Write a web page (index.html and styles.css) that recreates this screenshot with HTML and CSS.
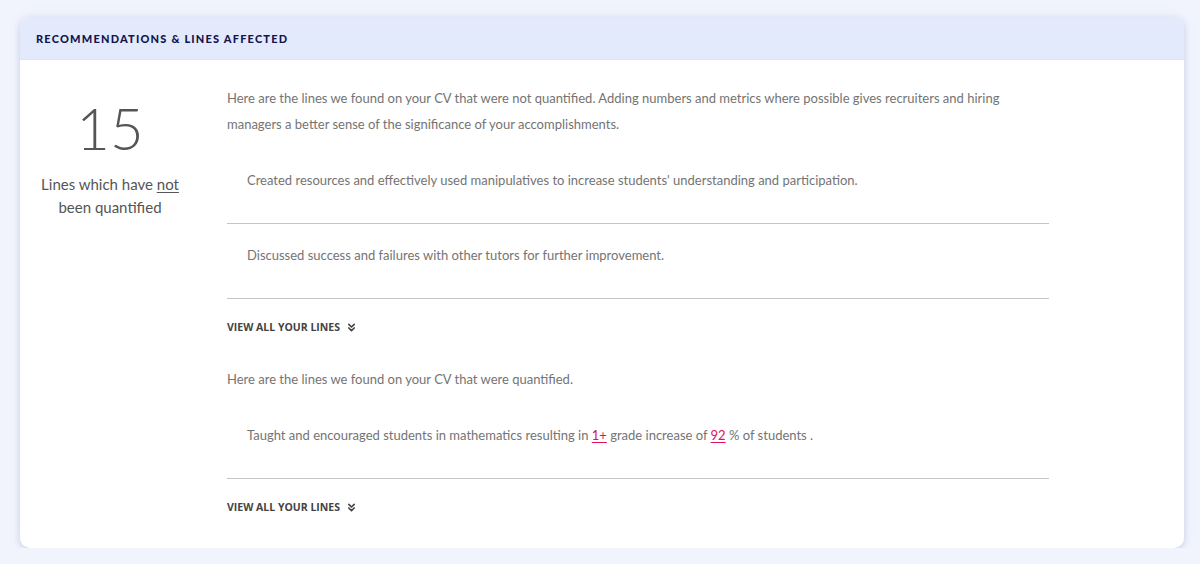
FILE: index.html
```html
<!DOCTYPE html>
<html lang="en">

<head>
    <meta charset="UTF-8">
    <meta name="viewport" content="width=device-width, initial-scale=1.0">
    <title>Recommendations</title>
    <link rel="stylesheet" href="styles.css">
</head>

<body>

    <div class="card">
        <!-- Card header -->
        <div class="card-header">
            <h2>Recommendations &amp; Lines Affected</h2>
        </div>

        <div class="card-body">
            <!-- Count on the left -->
            <div class="count-col">
                <div class="count">15</div>
                <p class="count-label">Lines which have <u>not</u><br>been quantified</p>
            </div>

            <!-- Lines on the right -->
            <div class="lines-col">
                <p class="intro">Here are the lines we found on your CV that were not quantified. Adding numbers and metrics where possible gives recruiters and hiring managers a better sense of the significance of your accomplishments.</p>

                <div class="line-item">Created resources and effectively used manipulatives to increase students' understanding and participation.</div>
                <div class="line-item">Discussed success and failures with other tutors for further improvement.</div>

                <a href="#" class="view-all">View all your lines
                    <svg width="9" height="9" viewBox="0 0 10 10" fill="none" stroke="currentColor" stroke-width="1.8" stroke-linecap="round" stroke-linejoin="round"><path d="M2 1.5 5 4.5 8 1.5"/><path d="M2 5.5 5 8.5 8 5.5"/></svg>
                </a>

                <p class="intro intro-second">Here are the lines we found on your CV that were quantified.</p>

                <div class="line-item">Taught and encouraged students in mathematics resulting in <span class="metric">1+</span> grade increase of <span class="metric">92</span> % of students .</div>

                <a href="#" class="view-all">View all your lines
                    <svg width="9" height="9" viewBox="0 0 10 10" fill="none" stroke="currentColor" stroke-width="1.8" stroke-linecap="round" stroke-linejoin="round"><path d="M2 1.5 5 4.5 8 1.5"/><path d="M2 5.5 5 8.5 8 5.5"/></svg>
                </a>
            </div>
        </div>
    </div>

</body>

</html>
```

FILE: styles.css
```css
* {
    margin: 0;
    padding: 0;
    box-sizing: border-box;
}

body {
    font-family: Lato, "Open Sans", Arial, sans-serif;
    background-color: #f1f4fd;
    padding: 17px 16px 0 20px;
}

.card {
    background-color: #fff;
    border-radius: 10px;
    box-shadow: 0 2px 6px rgba(60, 70, 120, 0.18), 0 0 14px rgba(120, 130, 200, 0.08);
    overflow: hidden;
}

.card-header {
    background-color: #e3eafc;
    height: 43px;
    display: flex;
    align-items: center;
    padding-left: 16px;
    border-bottom: 1px solid #dde4f7;
}

.card-header h2 {
    font-size: 11px;
    font-weight: 900;
    letter-spacing: 1.2px;
    text-transform: uppercase;
    color: #14144e;
}

.card-body {
    display: flex;
    padding: 25px 0 33px 0;
}

/* Left column with the count */
.count-col {
    width: 180px;
    flex-shrink: 0;
    text-align: center;
}

.count {
    font-size: 58px;
    font-weight: 300;
    color: #555;
    line-height: 60px;
    margin-top: 13px;
}

.count-label {
    font-size: 15px;
    line-height: 23px;
    color: #555;
    margin-top: 15px;
}

.count-label u {
    text-underline-offset: 2px;
}

/* Right column with the lines */
.lines-col {
    margin-left: 27px;
    width: 822px;
}

.intro {
    font-size: 13px;
    line-height: 26px;
    color: #747474;
}

.intro-second {
    margin-top: 31px;
}

.line-item {
    font-size: 13px;
    line-height: 20px;
    color: #747474;
    padding: 21px 20px 33px 20px;
    border-bottom: 1px solid #c4c4c4;
    margin-top: 12px;
}

.line-item + .line-item {
    margin-top: 0;
}

.metric {
    color: #e0105a;
    text-decoration: underline;
    text-underline-offset: 2px;
}

.view-all {
    display: inline-flex;
    align-items: center;
    gap: 7px;
    margin-top: 20px;
    font-family: "Open Sans", Lato, sans-serif;
    font-size: 10.5px;
    font-weight: 700;
    line-height: 16px;
    text-transform: uppercase;
    text-decoration: none;
    color: #444;
}

.view-all svg {
    display: block;
}
```
